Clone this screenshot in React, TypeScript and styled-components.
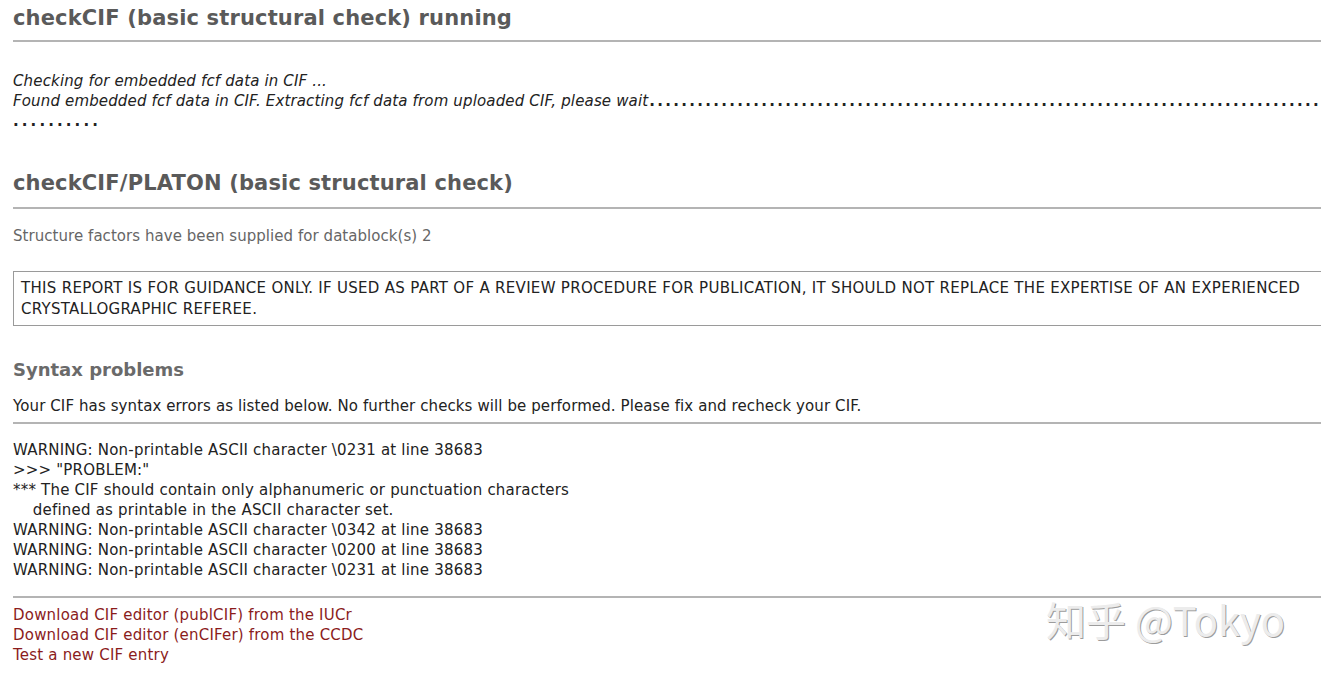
import React from "react";
import styled, { createGlobalStyle } from "styled-components";

const Global = createGlobalStyle`
  html, body { margin: 0; padding: 0; background: #fff; overflow: hidden; }
  body { font-family: "DejaVu Sans", Verdana, sans-serif; }
`;

const Page = styled.div`
  width: 100%;
  padding: 0 0 0 13px;
  box-sizing: border-box;
  position: relative;
  color: #222;
  font-size: 15px;
  letter-spacing: 0.1px;
`;

const Heading = styled.h2<{ $top?: number; $bottom?: number }>`
  margin: 0;
  font-family: "DejaVu Sans", Verdana, sans-serif;
  font-weight: bold;
  font-size: 21px;
  letter-spacing: 0.15px;
  color: #5a5a5a;
  line-height: 26px;
  padding-top: ${(p) => p.$top ?? 5}px;
  padding-bottom: ${(p) => p.$bottom ?? 9}px;
  border-bottom: 2px solid #b4b4b4;
`;

const SubHeading = styled.h3`
  margin: 0;
  font-family: "DejaVu Sans", Verdana, sans-serif;
  font-weight: bold;
  font-size: 18px;
  letter-spacing: 0;
  color: #6a6a6a;
  line-height: 22px;
  padding-top: 33px;
`;

const Italic = styled.div`
  font-style: italic;
  line-height: 20px;
  color: #222;
  letter-spacing: 0.15px;
`;

const ItalicBlock = styled.div`
  padding-top: 29px;
  padding-bottom: 39px;
`;

const DotRow = styled.div`
  display: flex;
  align-items: baseline;
  white-space: nowrap;
  line-height: 20px;
  overflow: hidden;
`;

const Dots = styled.span<{ $lead?: boolean; $gap: number }>`
  font-style: normal;
  font-weight: bold;
  letter-spacing: ${(p) => p.$gap}px;
  padding-left: ${(p) => (p.$lead ? 1 : 0)}px;
`;

const Plain = styled.div<{ $muted?: boolean; $pt?: number; $pb?: number }>`
  line-height: 20px;
  color: ${(p) => (p.$muted ? "#666" : "#222")};
  letter-spacing: ${(p) => (p.$muted ? 0.05 : 0.1)}px;
  padding-top: ${(p) => p.$pt ?? 0}px;
  padding-bottom: ${(p) => p.$pb ?? 0}px;
`;

const Notice = styled.div`
  margin-top: 25px;
  border: 1px solid #9a9a9a;
  border-right: none;
  padding: 6px 7px 5px;
  line-height: 21px;
  color: #222;
  white-space: nowrap;
  letter-spacing: 0.3px;
`;

const Rule = styled.div`
  border-bottom: 2px solid #b4b4b4;
`;

const Log = styled.div`
  padding-top: 16px;
  padding-bottom: 16px;
  line-height: 20px;
  color: #222;
  white-space: pre;
  letter-spacing: 0.2px;
`;

const Links = styled.div`
  padding-top: 7px;
  display: flex;
  flex-direction: column;
  letter-spacing: 0.2px;
`;

const Link = styled.a`
  color: #8b1c1c;
  text-decoration: none;
  line-height: 20px;
`;

const Watermark = styled.div`
  position: absolute;
  left: 1046px;
  top: 599px;
  font-family: "Noto Sans CJK SC", "Liberation Sans", sans-serif;
  font-size: 40px;
  line-height: 40px;
  color: #ececec;
  text-shadow: 1px 1px 0 #9c9c9c;
  letter-spacing: 0px;
  white-space: nowrap;
`;

export default function App() {
  return (
    <>
      <Global />
      <Page>
        <Heading $top={5}>checkCIF (basic structural check) running</Heading>
        <ItalicBlock>
          <Italic>Checking for embedded fcf data in CIF ...</Italic>
          <DotRow>
            <Italic>Found embedded fcf data in CIF. Extracting fcf data from uploaded CIF, please wait</Italic>
            <Dots $lead $gap={2.3}>{".".repeat(86)}</Dots>
          </DotRow>
          <DotRow>
            <Dots $gap={3.1}>{".........."}</Dots>
          </DotRow>
        </ItalicBlock>
        <Heading $top={0} $bottom={11}>checkCIF/PLATON (basic structural check)</Heading>
        <Plain $muted $pt={17}>Structure factors have been supplied for datablock(s) 2</Plain>
        <Notice>
          THIS REPORT IS FOR GUIDANCE ONLY. IF USED AS PART OF A REVIEW PROCEDURE FOR PUBLICATION, IT SHOULD NOT REPLACE THE EXPERTISE OF AN EXPERIENCED
          <br />
          CRYSTALLOGRAPHIC REFEREE.
        </Notice>
        <SubHeading>Syntax problems</SubHeading>
        <Plain $pt={15} $pb={6}>Your CIF has syntax errors as listed below. No further checks will be performed. Please fix and recheck your CIF.</Plain>
        <Rule />
        <Log>
          {`WARNING: Non-printable ASCII character \\0231 at line 38683
>>> "PROBLEM:"
*** The CIF should contain only alphanumeric or punctuation characters
    defined as printable in the ASCII character set.
WARNING: Non-printable ASCII character \\0342 at line 38683
WARNING: Non-printable ASCII character \\0200 at line 38683
WARNING: Non-printable ASCII character \\0231 at line 38683`}
        </Log>
        <Rule />
        <Links>
          <Link href="#">Download CIF editor (publCIF) from the IUCr</Link>
          <Link href="#">Download CIF editor (enCIFer) from the CCDC</Link>
          <Link href="#">Test a new CIF entry</Link>
        </Links>
        <Watermark>知乎 @Tokyo</Watermark>
      </Page>
    </>
  );
}
